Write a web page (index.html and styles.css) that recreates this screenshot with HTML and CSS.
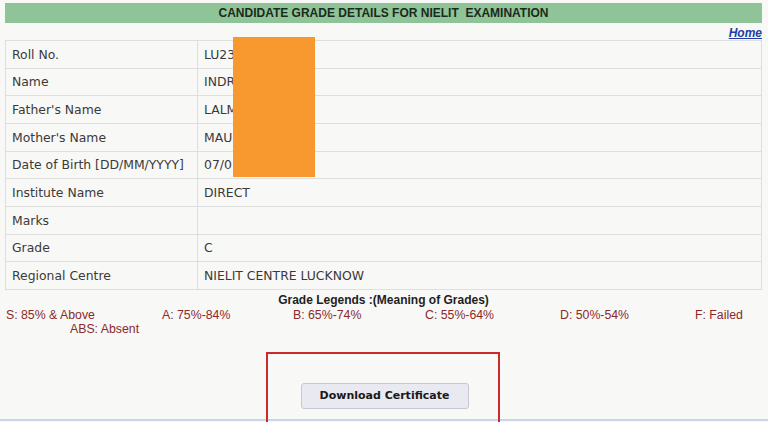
FILE: index.html
```html
<!DOCTYPE html>
<html>
<head>
<meta charset="utf-8">
<link rel="stylesheet" href="styles.css">
</head>
<body>
<div class="page">
  <div class="title">CANDIDATE GRADE DETAILS FOR NIELIT&nbsp; EXAMINATION</div>
  <div class="homebar"><a class="home" href="#">Home</a></div>
  <table class="details">
    <tr><td class="lbl">Roll No.</td><td>LU23</td></tr>
    <tr><td class="lbl">Name</td><td>INDR</td></tr>
    <tr><td class="lbl">Father's Name</td><td>LALM</td></tr>
    <tr><td class="lbl">Mother's Name</td><td>MAUI</td></tr>
    <tr><td class="lbl">Date of Birth [DD/MM/YYYY]</td><td>07/0</td></tr>
    <tr><td class="lbl">Institute Name</td><td>DIRECT</td></tr>
    <tr><td class="lbl">Marks</td><td></td></tr>
    <tr><td class="lbl">Grade</td><td>C</td></tr>
    <tr><td class="lbl">Regional Centre</td><td>NIELIT CENTRE LUCKNOW</td></tr>
  </table>
  <div class="legend-title">Grade Legends :(Meaning of Grades)</div>
  <div class="legend">
    <span class="g g1">S: 85% &amp; Above</span>
    <span class="g g2">A: 75%-84%</span>
    <span class="g g3">B: 65%-74%</span>
    <span class="g g4">C: 55%-64%</span>
    <span class="g g5">D: 50%-54%</span>
    <span class="g g6">F: Failed</span>
  </div>
  <div class="legend2">ABS: Absent</div>
  <div class="action">
    <button class="btn">Download Certificate</button>
  </div>
  <div class="mask"></div>
  <div class="highlight"></div>
</div>
</body>
</html>
```
FILE: styles.css
```css
html, body {
  margin: 0;
  padding: 0;
  background: #f8f8f6;
  overflow: hidden;
}
.page {
  position: relative;
  width: 768px;
  height: 422px;
  padding: 3px 6px 0 5px;
  box-sizing: border-box;
  font-family: "Liberation Sans", Arial, sans-serif;
}
.title {
  height: 20px;
  background: #8fc398;
  color: #1b2a1b;
  font-weight: bold;
  font-size: 12px;
  line-height: 21px;
  text-align: center;
}
.homebar {
  height: 17px;
  text-align: right;
  line-height: 18px;
}
.home {
  color: #1d3ea8;
  font-weight: bold;
  font-style: italic;
  font-size: 12px;
  text-decoration: underline;
}
.details {
  width: 100%;
  border-collapse: collapse;
  font-family: "DejaVu Sans", Verdana, sans-serif;
  font-size: 12.4px;
  color: #3a3a3a;
}
.details td {
  height: 26.67px;
  padding: 0 6px;
  border: 1px solid #dedede;
  vertical-align: middle;
}
.details td.lbl {
  width: 179px;
}
.legend-title {
  margin-top: 3px;
  text-align: center;
  font-weight: bold;
  font-size: 12px;
  color: #1e1e1e;
  line-height: 14px;
}
.legend {
  display: flex;
  padding-left: 1px;
  font-size: 12.3px;
  color: #8b2a2a;
  line-height: 15px;
  margin-top: 1px;
}
.g1 { width: 156px; }
.g2 { width: 131px; }
.g3 { width: 132px; }
.g4 { width: 135px; }
.g5 { width: 135px; }
.legend2 {
  padding-left: 65px;
  font-size: 12.3px;
  color: #8b2a2a;
  line-height: 13px;
}
.action {
  height: 85px;
  display: flex;
  justify-content: center;
  align-items: flex-end;
  padding-bottom: 10px;
  box-sizing: border-box;
  border-bottom: 2px solid #c9d6e8;
  margin: 0 -6px 0 -5px;
}
.btn {
  width: 168px;
  height: 26px;
  margin-left: 1px;
  background: #e9e9f1;
  border: 1px solid #c8c8d0;
  border-radius: 3px;
  font-family: "DejaVu Sans", Verdana, sans-serif;
  font-weight: bold;
  font-size: 11px;
  color: #1a1a1a;
}
.mask {
  position: absolute;
  left: 233px;
  top: 37px;
  width: 82px;
  height: 140px;
  background: #f8992f;
}
.highlight {
  position: absolute;
  left: 266px;
  top: 352px;
  width: 234px;
  height: 80px;
  border: 2px solid #cc2a2a;
  box-sizing: border-box;
}
```
